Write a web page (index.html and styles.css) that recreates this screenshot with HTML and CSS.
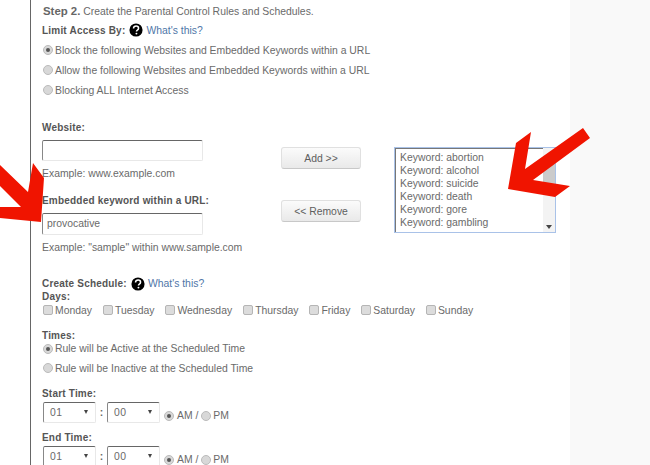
FILE: index.html
```html
<!DOCTYPE html>
<html lang="en">
<head>
<meta charset="utf-8">
<title>Parental Control Rules</title>
<link rel="stylesheet" href="styles.css">
</head>
<body>
<div class="page">
  <main class="panel">
    <p class="step"><b>Step 2.</b> Create the Parental Control Rules and Schedules.</p>
    <div class="label-row limit">
      <b>Limit Access By:</b>
      <svg class="help" viewBox="0 0 16 16"><circle cx="8" cy="8" r="7.5" fill="#000"/><path d="M5.2 6.2c0-1.7 1.2-2.7 2.9-2.7s2.8 1 2.8 2.4c0 1.1-.6 1.7-1.4 2.3-.7.5-.9.8-.9 1.5" fill="none" stroke="#fff" stroke-width="1.8"/><circle cx="8.5" cy="12.1" r="1.1" fill="#fff"/></svg>
      <a class="link">What's this?</a>
    </div>
    <label class="opt"><span class="radio on"></span>Block the following Websites and Embedded Keywords within a URL</label>
    <label class="opt"><span class="radio"></span>Allow the following Websites and Embedded Keywords within a URL</label>
    <label class="opt"><span class="radio"></span>Blocking ALL Internet Access</label>

    <section class="rules">
      <div class="fields">
        <b class="field-label">Website:</b>
        <div class="input"></div>
        <p class="hint">Example: www.example.com</p>
        <b class="field-label second">Embedded keyword within a URL:</b>
        <div class="input">provocative</div>
        <p class="hint">Example: "sample" within www.sample.com</p>
      </div>
      <div class="actions">
        <div class="btn">Add &gt;&gt;</div>
        <div class="btn">&lt;&lt; Remove</div>
      </div>
      <div class="listbox">
        <div class="items">
          <div>Keyword: abortion</div>
          <div>Keyword: alcohol</div>
          <div>Keyword: suicide</div>
          <div>Keyword: death</div>
          <div>Keyword: gore</div>
          <div>Keyword: gambling</div>
        </div>
        <div class="scroll"><span class="thumb"></span><span class="down"></span></div>
      </div>
    </section>

    <div class="label-row schedule">
      <b>Create Schedule:</b>
      <svg class="help" viewBox="0 0 16 16"><circle cx="8" cy="8" r="7.5" fill="#000"/><path d="M5.2 6.2c0-1.7 1.2-2.7 2.9-2.7s2.8 1 2.8 2.4c0 1.1-.6 1.7-1.4 2.3-.7.5-.9.8-.9 1.5" fill="none" stroke="#fff" stroke-width="1.8"/><circle cx="8.5" cy="12.1" r="1.1" fill="#fff"/></svg>
      <a class="link">What's this?</a>
    </div>
    <b class="sub days-label">Days:</b>
    <div class="days">
      <label><span class="check"></span>Monday</label>
      <label><span class="check"></span>Tuesday</label>
      <label><span class="check"></span>Wednesday</label>
      <label><span class="check"></span>Thursday</label>
      <label><span class="check"></span>Friday</label>
      <label><span class="check"></span>Saturday</label>
      <label><span class="check"></span>Sunday</label>
    </div>
    <b class="sub times-label">Times:</b>
    <label class="opt first"><span class="radio on"></span>Rule will be Active at the Scheduled Time</label>
    <label class="opt"><span class="radio"></span>Rule will be Inactive at the Scheduled Time</label>

    <b class="sub start-label">Start Time:</b>
    <div class="time">
      <div class="select">01<i></i></div><span class="colon">:</span><div class="select">00<i></i></div>
      <span class="ampm"><span class="radio on"></span>AM / <span class="radio"></span>PM</span>
    </div>
    <b class="sub end-label">End Time:</b>
    <div class="time">
      <div class="select">01<i></i></div><span class="colon">:</span><div class="select">00<i></i></div>
      <span class="ampm"><span class="radio on"></span>AM / <span class="radio"></span>PM</span>
    </div>
  </main>
</div>
<svg class="arrow" viewBox="0 0 650 465" aria-hidden="true">
  <polygon points="0,165 28,192 33,163 44,178 41,222 0,218 0,207 21,207 0,186" fill="#f01400"/>
  <polygon points="583,128 590,138 533,180 570,186 555,197 508,189 516,143 531,132 525,169" fill="#f01400"/>
</svg>
</body>
</html>
```
FILE: styles.css
```css
html, body { margin: 0; height: 465px; overflow: hidden; }
body {
  background: #f9f9f9;
  font-family: "Liberation Sans", Arial, sans-serif;
  font-size: 10.4px;
  color: #6a6a6a;
  position: relative;
}
b { color: #555; letter-spacing: .2px; font-size: 10px; }
.page { width: 570px; height: 465px; background: #fff; padding-left: 30px; box-sizing: border-box; overflow: hidden; }
.panel { border-left: 1px solid #666; height: 465px; padding-left: 11px; box-sizing: border-box; }
.step { margin: 0 0 0 1px; padding-top: 4px; height: 20px; box-sizing: border-box; line-height: 14px; }
.step b { font-size: 11.4px; letter-spacing: 0; color: #666; }
.label-row { display: flex; align-items: center; gap: 4px; height: 20px; }
.help { width: 14px; height: 14px; }
.link { color: #4f76a8; margin-left: -1px; }
.opt { display: flex; align-items: center; height: 20px; }
.radio {
  display: inline-block; width: 8px; height: 8px; border-radius: 50%;
  background: #d8d8d8; border: 1px solid #bbb; box-sizing: content-box;
  margin: 0 2px 0 1px; flex: none; position: relative;
}
.radio.on::after {
  content: ""; position: absolute; left: 2px; top: 2px; width: 4px; height: 4px; border-radius: 50%; background: #555;
}
.rules { display: flex; margin-top: 22px; height: 153px; }
.fields { width: 239px; flex: none; }
.field-label { display: block; height: 12px; line-height: 12px; }
.field-label.second { margin-top: 15px; }
.input {
  width: 161px; height: 21px; box-sizing: border-box; margin-top: 6px;
  border: 1px solid #e8e8e8; border-top: 1px solid #666; border-left: 1px solid #888;
  border-radius: 2px; padding: 0 4px; line-height: 19px;
}
.second + .input { height: 22px; line-height: 20px; }
.hint { margin: 6px 0 0; line-height: 13px; }
.actions { width: 113px; flex: none; padding-top: 25px; box-sizing: border-box; }
.btn {
  width: 80px; height: 22px; box-sizing: border-box; line-height: 21px; text-align: center;
  background: linear-gradient(#fbfbfb, #e9e9e9); border: 1px solid #e0e0e0; border-bottom-color: #c8c8c8;
  border-radius: 3px; margin-bottom: 31px; color: #5e5e5e;
}
.listbox {
  width: 162px; height: 86px; margin-top: 25px; box-sizing: border-box; flex: none; display: flex; overflow: hidden;
  border: 1px solid #a9c2e8; position: relative; background: #fff;
  box-shadow: inset 1px 1px 0 #777;
}
.items { flex: 1; padding: 3px 0 0 5px; line-height: 13px; }
.scroll { width: 12px; background: #f3f3f3; position: relative; }
.thumb { position: absolute; left: 0; right: 0; top: 14px; height: 24px; background: #cbcbcb; }
.down { position: absolute; left: 3px; bottom: 3px; border: 3px solid transparent; border-top: 4px solid #444; border-bottom: 0; }
.schedule { margin-top: 1px; height: 15px; }
.sub { display: block; height: 11px; line-height: 11px; }
.days { display: flex; margin-top: 0; height: 16px; align-items: center; }
.days label { display: flex; align-items: center; margin-right: 10px; }
.check {
  width: 8px; height: 8px; background: #dcdcdc; border: 1px solid #b5b5b5; border-radius: 2px; margin: 0 2px 0 1px;
}
.times-label { margin-top: 12px; }
.opt.first { height: 15px; margin-bottom: 2px; }
.start-label { margin-top: 10px; }
.end-label { margin-top: 9px; }
.time { display: flex; align-items: center; height: 21px; margin: 3px 0 0 1px; }
.select {
  width: 53px; height: 21px; box-sizing: border-box; border: 1px solid #e8e8e8; border-top-color: #666; border-left-color: #888;
  border-radius: 2px; padding-left: 6px; line-height: 19px; position: relative; letter-spacing: .4px;
}
.select i { position: absolute; right: 7px; top: 7px; border: 2.5px solid transparent; border-top: 4px solid #444; border-bottom: 0; }
.colon { width: 11px; text-align: center; font-weight: bold; }
.ampm { display: flex; align-items: center; margin: 6px 0 0 3px; white-space: pre; }
.ampm .radio.on { margin-right: 3px; }
.ampm .radio:last-of-type { margin-left: 0; }
.arrow { position: absolute; left: 0; top: 0; width: 650px; height: 465px; pointer-events: none; }
```
